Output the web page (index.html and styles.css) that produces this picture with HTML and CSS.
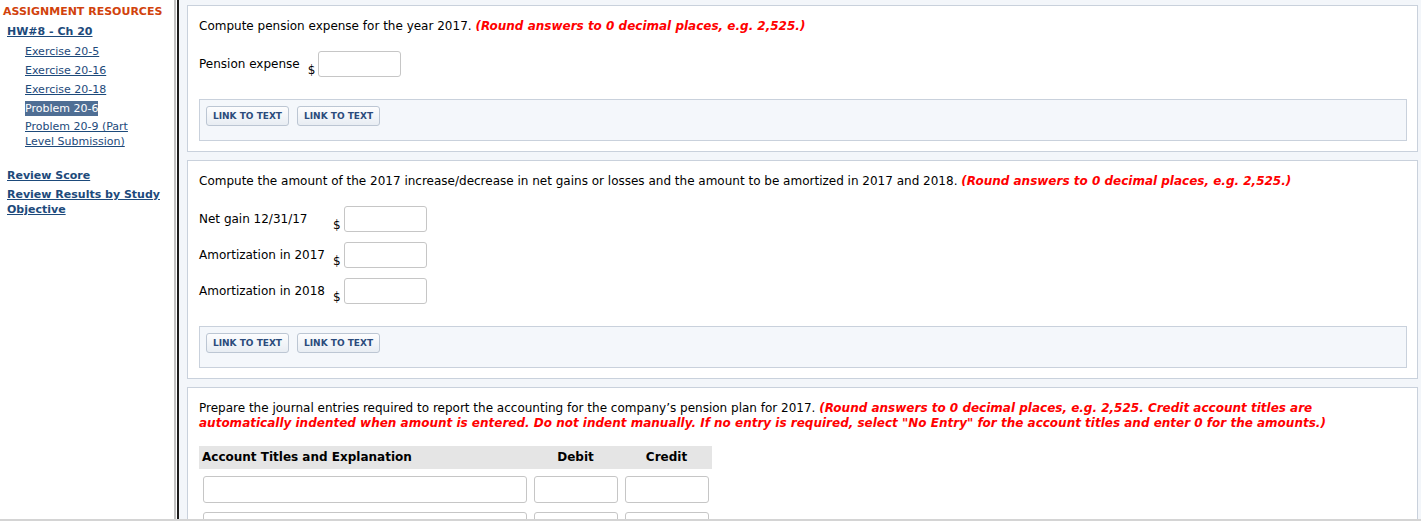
FILE: index.html
```html
<!DOCTYPE html>
<html>
<head>
<meta charset="utf-8">
<link rel="stylesheet" href="styles.css">
</head>
<body>
<div class="page">
  <aside class="sidebar">
    <div class="side-title">ASSIGNMENT RESOURCES</div>
    <a class="side-hw" href="#">HW#8 - Ch 20</a>
    <ul class="side-list">
      <li><a href="#">Exercise 20-5</a></li>
      <li><a href="#">Exercise 20-16</a></li>
      <li><a href="#">Exercise 20-18</a></li>
      <li><a class="current" href="#">Problem 20-6</a></li>
      <li><a href="#">Problem 20-9 (Part Level Submission)</a></li>
    </ul>
    <a class="side-bold" href="#">Review Score</a>
    <a class="side-bold" href="#">Review Results by Study Objective</a>
  </aside>
  <div class="divider"></div>
  <main class="main">
    <section class="card">
      <p class="q">Compute pension expense for the year 2017. <span class="note">(Round answers to 0 decimal places, e.g. 2,525.)</span></p>
      <div class="fields">
        <label class="flabel">Pension expense</label><span class="dollar">$</span><input class="amt" type="text">
      </div>
      <div class="links"><button class="lbtn">LINK TO TEXT</button><button class="lbtn">LINK TO TEXT</button></div>
    </section>

    <section class="card">
      <p class="q">Compute the amount of the 2017 increase/decrease in net gains or losses and the amount to be amortized in 2017 and 2018. <span class="note">(Round answers to 0 decimal places, e.g. 2,525.)</span></p>
      <div class="fields">
        <label class="flabel">Net gain 12/31/17</label><span class="dollar">$</span><input class="amt" type="text">
        <label class="flabel">Amortization in 2017</label><span class="dollar">$</span><input class="amt" type="text">
        <label class="flabel">Amortization in 2018</label><span class="dollar">$</span><input class="amt" type="text">
      </div>
      <div class="links"><button class="lbtn">LINK TO TEXT</button><button class="lbtn">LINK TO TEXT</button></div>
    </section>

    <section class="card">
      <p class="q">Prepare the journal entries required to report the accounting for the company’s pension plan for 2017. <span class="note">(Round answers to 0 decimal places, e.g. 2,525. Credit account titles are automatically indented when amount is entered. Do not indent manually. If no entry is required, select "No Entry" for the account titles and enter 0 for the amounts.)</span></p>
      <div class="journal">
        <div class="jh jh-title">Account Titles and Explanation</div>
        <div class="jh jh-num">Debit</div>
        <div class="jh jh-num">Credit</div>
        <div class="jc"><input class="jin" type="text"></div>
        <div class="jc"><input class="jin" type="text"></div>
        <div class="jc"><input class="jin" type="text"></div>
        <div class="jc"><input class="jin" type="text"></div>
        <div class="jc"><input class="jin" type="text"></div>
        <div class="jc"><input class="jin" type="text"></div>
      </div>
    </section>
  </main>
</div>
</body>
</html>
```

FILE: styles.css
```css
html, body {
  margin: 0;
  padding: 0;
  background: #ffffff;
}
body {
  font-family: "DejaVu Sans", Verdana, sans-serif;
  color: #000;
}
.page {
  display: flex;
  height: 519px;
  overflow: hidden;
  border-bottom: 2px solid #d4d4d4;
}
.sidebar {
  width: 164px;
  flex: none;
  padding: 4px 10px 0 0;
  border-right: 2px solid #c2c2c2;
  font-size: 11px;
  line-height: 15px;
}
.side-title {
  color: #d1420c;
  font-weight: bold;
  padding-left: 3px;
}
.side-hw {
  display: block;
  margin: 5px 0 0 7px;
  color: #1d4a7b;
  font-weight: bold;
}
.side-list {
  list-style: none;
  margin: 5px 0 0 0;
  padding: 0 0 0 25px;
}
.side-list li {
  margin-bottom: 4px;
  max-width: 130px;
}
.side-list li:nth-child(4) {
  margin-bottom: 3px;
}
.side-list a {
  color: #1d4a7b;
}
.side-list a.current {
  background: #4f6e94;
  color: #ffffff;
  text-decoration: none;
  padding: 1px 0;
}
.side-bold {
  display: block;
  margin: 0 0 4px 7px;
  color: #1d4a7b;
  font-weight: bold;
}
.side-list + .side-bold {
  margin-top: 19px;
}
.divider {
  width: 1px;
  flex: none;
  background: #ffffff;
  border-right: 2px solid #1c1c1c;
}
.main {
  flex: 1;
  background: #f3f6fa;
  padding: 5px 3px 0 8px;
}
.card {
  background: #ffffff;
  border: 1px solid #c9d1dc;
  padding: 13px 10px 10px 11px;
  margin-bottom: 8px;
}
.q {
  margin: 0;
  font-size: 12px;
  line-height: 15px;
}
.note {
  color: #ff0000;
  font-weight: bold;
  font-style: italic;
}
.fields {
  display: grid;
  grid-template-columns: max-content max-content 83px;
  row-gap: 10px;
  margin-top: 17px;
  font-size: 12px;
}
.flabel {
  align-self: center;
  padding-right: 8px;
  line-height: 15px;
}
.dollar {
  align-self: end;
  line-height: 14px;
  padding: 0 3px 0 0;
}
.amt {
  box-sizing: border-box;
  width: 83px;
  height: 26px;
  margin: 0;
  border: 1px solid #c6c6c6;
  border-radius: 3px;
  background: #fff;
}
.links {
  margin-top: 22px;
  background: #f4f7fb;
  border: 1px solid #c9d1dc;
  padding: 6px 6px 14px 6px;
  display: flex;
  gap: 8px;
}
.lbtn {
  box-sizing: border-box;
  height: 20px;
  margin: 0;
  padding: 0 6px;
  font-family: "DejaVu Sans", Verdana, sans-serif;
  font-size: 9px;
  font-weight: bold;
  color: #2b4b7c;
  background: linear-gradient(#fdfdfe, #e8edf3);
  border: 1px solid #bcc6d3;
  border-radius: 3px;
}
.journal {
  display: grid;
  grid-template-columns: 331px 91px 91px;
  margin-top: 15px;
}
.jh {
  background: #e5e5e5;
  height: 23px;
  line-height: 23px;
  font-size: 12px;
  font-weight: bold;
}
.jh-title {
  padding-left: 3px;
}
.jh-num {
  text-align: center;
}
.jc {
  padding: 7px 3px 2px 4px;
}
.jin {
  box-sizing: border-box;
  display: block;
  width: 100%;
  height: 27px;
  margin: 0;
  border: 1px solid #c6c6c6;
  border-radius: 3px;
  background: #fff;
}
```
